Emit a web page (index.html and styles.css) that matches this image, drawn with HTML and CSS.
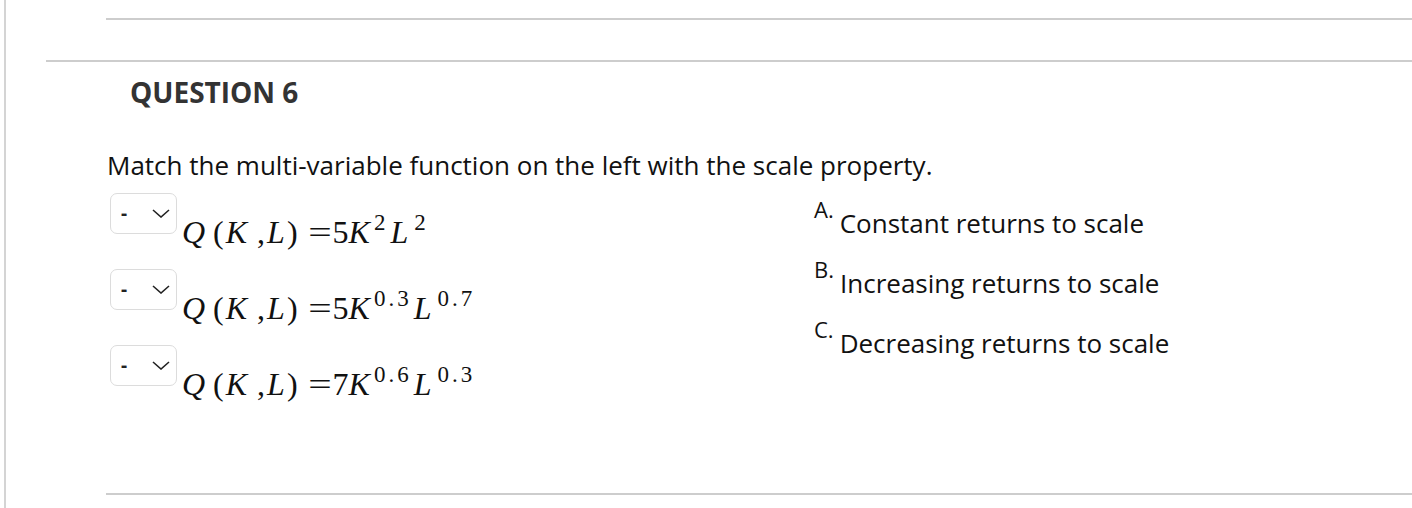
FILE: index.html
```html
<!DOCTYPE html>
<html lang="en">
<head>
<meta charset="utf-8">
<title>Question 6</title>
<link rel="stylesheet" href="styles.css">
</head>
<body>
<div class="page">
  <div class="rule rule-top"></div>
  <div class="rule rule-section"></div>
  <h2 class="qtitle">QUESTION 6</h2>
  <p class="prompt">Match the multi-variable function on the left with the scale property.</p>
  <div class="match">
    <div class="left">
      <div class="row">
        <div class="select"><span class="dash">-</span><svg class="chev" width="18" height="9" viewBox="0 0 18 9"><polyline points="1,1 9,8 17,1" fill="none" stroke="#222" stroke-width="1.6"/></svg></div>
        <div class="math"><i>Q</i><span class="lp">(</span><i class="k1">K</i><span class="cm">,</span><i class="l1">L</i><span class="rp">)</span><span class="eq">=</span><span class="n">5</span><i>K</i><sup class="s1">2</sup><i class="l2">L</i><sup class="s2">2</sup></div>
      </div>
      <div class="row">
        <div class="select"><span class="dash">-</span><svg class="chev" width="18" height="9" viewBox="0 0 18 9"><polyline points="1,1 9,8 17,1" fill="none" stroke="#222" stroke-width="1.6"/></svg></div>
        <div class="math"><i>Q</i><span class="lp">(</span><i class="k1">K</i><span class="cm">,</span><i class="l1">L</i><span class="rp">)</span><span class="eq">=</span><span class="n">5</span><i>K</i><sup class="s1">0.3</sup><i class="l2">L</i><sup class="s2">0.7</sup></div>
      </div>
      <div class="row">
        <div class="select"><span class="dash">-</span><svg class="chev" width="18" height="9" viewBox="0 0 18 9"><polyline points="1,1 9,8 17,1" fill="none" stroke="#222" stroke-width="1.6"/></svg></div>
        <div class="math"><i>Q</i><span class="lp">(</span><i class="k1">K</i><span class="cm">,</span><i class="l1">L</i><span class="rp">)</span><span class="eq">=</span><span class="n">7</span><i>K</i><sup class="s1">0.6</sup><i class="l2">L</i><sup class="s2">0.3</sup></div>
      </div>
    </div>
    <ol class="options">
      <li><span class="lbl">A.</span>Constant returns to scale</li>
      <li><span class="lbl">B.</span>Increasing returns to scale</li>
      <li><span class="lbl">C.</span>Decreasing returns to scale</li>
    </ol>
  </div>
  <div class="rule rule-bottom"></div>
</div>
</body>
</html>
```

FILE: styles.css
```css
html, body {
  margin: 0;
  padding: 0;
  background: #fff;
}
body {
  font-family: "Open Sans", "Noto Sans", sans-serif;
  color: #111;
}
.page {
  margin-left: 4px;
  border-left: 2px solid #d4d4d4;
  height: 508px;
  overflow: hidden;
}
.rule {
  height: 2px;
  background: #cdcdcd;
}
.rule-top {
  margin-top: 18px;
  margin-left: 100px;
}
.rule-section {
  margin-top: 40px;
  margin-left: 40px;
}
.qtitle {
  margin: 11px 0 0 124px;
  font-size: 28px;
  line-height: 38px;
  font-weight: 700;
  color: #333;
}
.prompt {
  margin: 36px 0 0 101px;
  font-size: 26px;
  line-height: 36px;
}
.match {
  margin: 10px 0 0 104px;
  display: grid;
  grid-template-columns: 704px auto;
}
.left {
  display: flex;
  flex-direction: column;
  gap: 18px;
}
.row {
  display: flex;
  align-items: flex-start;
  height: 58px;
}
.select {
  box-sizing: border-box;
  width: 67px;
  height: 41px;
  border: 1.5px solid #dcdcdc;
  border-radius: 7px;
  display: flex;
  align-items: center;
  padding: 0 0 0 10px;
}
.dash {
  font-size: 19px;
  font-weight: 700;
  line-height: 1;
  width: 31px;
  color: #222;
}
.chev {
  display: block;
}
.math {
  margin: 21px 0 0 5px;
  font-family: "Liberation Serif", "Times New Roman", serif;
  font-size: 32px;
  line-height: 36px;
  color: #111;
  white-space: nowrap;
}
.math i {
  font-style: italic;
}
.math .lp {
  margin-left: 8px;
}
.math .k1 {
  margin-left: 2px;
}
.math .cm {
  margin-left: 10px;
}
.math .l1 {
  margin-left: 2px;
}
.math .rp {
  margin-left: 2px;
}
.math .eq {
  display: inline-block;
  transform: scaleX(1.3);
  margin: 0 4px 0 13px;
}
.math .l2 {
  margin-left: 5px;
}
.math sup {
  font-size: 23px;
  line-height: 0;
  vertical-align: 13px;
  letter-spacing: 3px;
  margin-right: -3px;
}
.math .s1 {
  margin-left: 4px;
}
.math .s2 {
  margin-left: 6px;
}
.options {
  list-style: none;
  margin: 0;
  padding: 0;
}
.options li {
  height: 60px;
  line-height: 60px;
  font-size: 26px;
  white-space: nowrap;
}
.lbl {
  font-size: 22px;
  line-height: 22px;
  vertical-align: 15px;
  margin-right: 6px;
}
.rule-bottom {
  margin-top: 90px;
  margin-left: 100px;
}
```
